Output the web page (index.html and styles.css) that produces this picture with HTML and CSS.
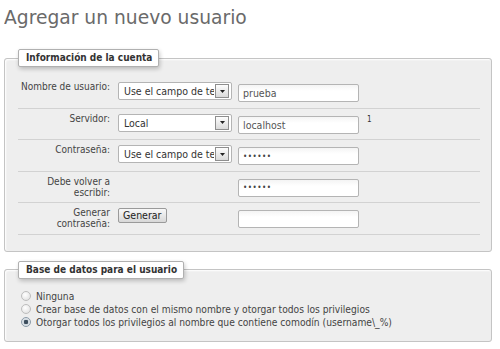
FILE: index.html
```html
<!DOCTYPE html>
<html>
	<head>
		<link rel="stylesheet" href="styles.css">
	</head>
	<body>
		<h2 class="title">Agregar un nuevo usuario</h2>

		<fieldset class="box">
			<legend>Información de la cuenta</legend>

			<div class="row">
				<label class="row-label">Nombre de usuario:</label>
				<span class="select">
					<span class="select-text">Use el campo de texto</span>
					<span class="select-btn"><svg width="5" height="3" viewBox="0 0 5 3"><path d="M0 0h5L2.5 3z" fill="#222"/></svg></span>
				</span>
				<input class="text-input" type="text" value="prueba">
			</div>

			<div class="row">
				<label class="row-label">Servidor:</label>
				<span class="select">
					<span class="select-text">Local</span>
					<span class="select-btn"><svg width="5" height="3" viewBox="0 0 5 3"><path d="M0 0h5L2.5 3z" fill="#222"/></svg></span>
				</span>
				<input class="text-input" type="text" value="localhost">
				<span class="note">1</span>
			</div>

			<div class="row">
				<label class="row-label">Contraseña:</label>
				<span class="select">
					<span class="select-text">Use el campo de texto</span>
					<span class="select-btn"><svg width="5" height="3" viewBox="0 0 5 3"><path d="M0 0h5L2.5 3z" fill="#222"/></svg></span>
				</span>
				<input class="text-input" type="password" value="123456">
			</div>

			<div class="row">
				<label class="row-label">Debe volver a<br>escribir:</label>
				<span></span>
				<input class="text-input" type="password" value="123456">
			</div>

			<div class="row">
				<label class="row-label">Generar<br>contraseña:</label>
				<span><button class="gen-button">Generar</button></span>
				<input class="text-input" type="text" value="">
			</div>
		</fieldset>

		<fieldset class="box box-db">
			<legend>Base de datos para el usuario</legend>
			<div class="radio-line"><span class="radio"></span>Ninguna</div>
			<div class="radio-line"><span class="radio"></span>Crear base de datos con el mismo nombre y otorgar todos los privilegios</div>
			<div class="radio-line"><span class="radio radio-on"></span>Otorgar todos los privilegios al nombre que contiene comodín (username\_%)</div>
		</fieldset>
	</body>
</html>
```

FILE: styles.css
```css
body {
	margin: 0 8px 0 4px;
	font-family: "DejaVu Sans Condensed", "DejaVu Sans", sans-serif;
	font-stretch: condensed;
	font-size: 10px;
	color: #444;
	background: #fff;
}

.title {
	margin: 6px 0 0 0;
	font-family: "DejaVu Sans", sans-serif;
	font-stretch: normal;
	font-size: 18.7px;
	font-weight: normal;
	line-height: 24px;
	color: #6a6a6a;
}

.box {
	margin: 19px 0 0 0;
	padding: 10px 11px 16px 13px;
	background: #eee;
	border: 1px solid #c4c4c4;
	border-radius: 3px;
	box-shadow: 1px 1px 2px #fff inset;
}

.box legend {
	padding: 0 6px 0 7px;
	line-height: 16px;
	font-weight: bold;
	color: #333;
	background: #fff;
	border: 1px solid #b0b0b0;
	border-radius: 2px;
	box-shadow: 1px 2px 4px rgba(0, 0, 0, 0.22);
}

.row {
	display: grid;
	grid-template-columns: 94px 114px 121px auto;
	column-gap: 6px;
	align-items: start;
	padding: 5px 0 5.5px;
	height: 31.5px;
	box-sizing: border-box;
	border-bottom: 1px solid #d2d2d2;
}

.row-label {
	margin: -1px 0 -3px;
	padding-right: 2px;
	text-align: right;
	line-height: 11px;
	color: #444;
}

.select {
	display: flex;
	align-items: center;
	height: 18px;
	box-sizing: border-box;
	padding: 0 2px 0 5px;
	background: #fff;
	border: 1px solid #b4b4b4;
	border-radius: 2px;
	overflow: hidden;
}
.select-text {
	flex: 1;
	white-space: nowrap;
	overflow: hidden;
	color: #333;
	font-size: 10.5px;
}
.select-btn {
	display: flex;
	align-items: center;
	justify-content: center;
	flex: none;
	width: 12px;
	height: 12px;
	margin-left: 1px;
	border: 1px solid #8e8e8e;
	background: linear-gradient(#fdfdfd, #dadada);
}

.text-input {
	margin: 2px 0 0 0;
	width: 121px;
	height: 18px;
	box-sizing: border-box;
	padding: 0 4px;
	font-family: inherit;
	font-stretch: condensed;
	font-size: 10.5px;
	color: #555;
	background: linear-gradient(#f4f4f4, #fff 6px);
	border: 1px solid #b4b4b4;
	border-radius: 2px;
	outline: none;
}
.text-input[type="password"] {
	font-size: 8px;
	letter-spacing: 0.5px;
	color: #444;
}

.note {
	margin-left: 2px;
	font-size: 8px;
	line-height: 11px;
	color: #333;
}

.gen-button {
	margin: 0;
	padding: 0 4px;
	height: 15px;
	font-family: inherit;
	font-stretch: condensed;
	font-size: 10.5px;
	line-height: 13px;
	color: #222;
	background: linear-gradient(#f8f8f8, #d8d8d8);
	border: 1px solid #9a9a9a;
	border-radius: 2px;
}

.box-db {
	margin-top: 9px;
	padding: 11px 11px 12px 13px;
}

.radio-line {
	display: flex;
	align-items: center;
	line-height: 13px;
	font-size: 10.2px;
	color: #444;
}
.radio {
	width: 8px;
	height: 8px;
	margin: 0 5px 0 3px;
	border: 1px solid #bdbdbd;
	border-radius: 50%;
	background: radial-gradient(circle at 40% 35%, #fff, #dcdcdc);
}
.radio-on {
	border-color: #8a9aa8;
	background: radial-gradient(circle, #3d4e5e 0 2px, #cfd7de 2.5px, #f4f6f8);
}
```
